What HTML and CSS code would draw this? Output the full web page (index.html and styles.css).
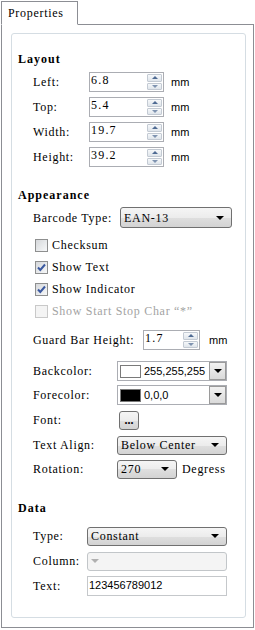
FILE: index.html
```html
<!DOCTYPE html>
<html lang="en">
<head>
    <meta charset="UTF-8">
    <title>Properties</title>
    <link rel="stylesheet" href="styles.css">
</head>
<body>
    <div class="tabs">
        <div class="tab">Properties</div>
    </div>
    <div class="panel">
        <div class="group">
            <h3 class="head-layout">Layout</h3>
            <div class="row row-first">
                <label class="lbl-layout">Left:</label>
                <span class="spin"><span class="val">6.8</span><span class="btns"><i class="up"></i><i class="down"></i></span></span>
                <span class="unit">mm</span>
            </div>
            <div class="row">
                <label class="lbl-layout">Top:</label>
                <span class="spin"><span class="val">5.4</span><span class="btns"><i class="up"></i><i class="down"></i></span></span>
                <span class="unit">mm</span>
            </div>
            <div class="row">
                <label class="lbl-layout">Width:</label>
                <span class="spin"><span class="val">19.7</span><span class="btns"><i class="up"></i><i class="down"></i></span></span>
                <span class="unit">mm</span>
            </div>
            <div class="row">
                <label class="lbl-layout">Height:</label>
                <span class="spin"><span class="val">39.2</span><span class="btns"><i class="up"></i><i class="down"></i></span></span>
                <span class="unit">mm</span>
            </div>

            <h3 class="head-appearance">Appearance</h3>
            <div class="row row-barcode">
                <label class="lbl-barcode">Barcode Type:</label>
                <span class="combo combo-barcode">EAN-13</span>
            </div>
            <div class="check check-first">
                <span class="cb"></span>Checksum
            </div>
            <div class="check">
                <span class="cb"><svg viewBox="0 0 11 11"><path d="M2 5.5 L4.3 8 L9 2.5"/></svg></span>Show Text
            </div>
            <div class="check">
                <span class="cb"><svg viewBox="0 0 11 11"><path d="M2 5.5 L4.3 8 L9 2.5"/></svg></span>Show Indicator
            </div>
            <div class="check disabled">
                <span class="cb"></span>Show Start Stop Char “*”
            </div>
            <div class="row row-guard">
                <label class="lbl-guard">Guard Bar Height:</label>
                <span class="spin spin-short"><span class="val">1.7</span><span class="btns"><i class="up"></i><i class="down"></i></span></span>
                <span class="unit unit-guard">mm</span>
            </div>
            <div class="row row-color">
                <label class="lbl-color">Backcolor:</label>
                <span class="color"><span class="swatch"></span><span class="cval">255,255,255</span><span class="dd"></span></span>
            </div>
            <div class="row row-tight">
                <label class="lbl-color">Forecolor:</label>
                <span class="color"><span class="swatch swatch-black"></span><span class="cval">0,0,0</span><span class="dd"></span></span>
            </div>
            <div class="row">
                <label class="lbl-color">Font:</label>
                <span class="btn">...</span>
            </div>
            <div class="row">
                <label class="lbl-color">Text Align:</label>
                <span class="combo combo-align">Below Center</span>
            </div>
            <div class="row row-tight">
                <label class="lbl-color">Rotation:</label>
                <span class="combo combo-rotation">270</span>
                <span class="degress">Degress</span>
            </div>

            <h3 class="head-data">Data</h3>
            <div class="row row-type">
                <label class="lbl-data">Type:</label>
                <span class="combo combo-data">Constant</span>
            </div>
            <div class="row">
                <label class="lbl-data">Column:</label>
                <span class="combo combo-data combo-disabled"></span>
            </div>
            <div class="row">
                <label class="lbl-data">Text:</label>
                <span class="textbox">123456789012</span>
            </div>
        </div>
    </div>
</body>
</html>
```

FILE: styles.css
```css
body {
    margin: 0;
    background: #fff;
    font-family: "Liberation Serif", serif;
    font-size: 12px;
    letter-spacing: 0.7px;
    line-height: 14px;
    color: #000;
}

.tabs {
    height: 25px;
    padding: 1px 0 0 1px;
    box-sizing: border-box;
}

.tab {
    position: relative;
    z-index: 1;
    width: 77px;
    height: 24px;
    box-sizing: border-box;
    border: 1px solid #8c8e94;
    border-bottom: 1px solid #fff;
    background: #fff;
    padding-left: 6px;
    line-height: 22px;
}

.panel {
    margin: -1px 0 0 1px;
    width: 253px;
    height: 604px;
    box-sizing: border-box;
    border: 1px solid #8c8e94;
    padding: 8px 7px 9px 9px;
}

.group {
    width: 235px;
    height: 585px;
    box-sizing: border-box;
    border: 1px solid #d5dde3;
    border-radius: 3px;
}

h3 {
    margin: 0;
    height: 14px;
    padding-left: 6px;
    font-size: 12px;
    font-weight: bold;
    letter-spacing: 1px;
}

.head-layout { margin-top: 18px; }
.head-appearance { margin-top: 21px; }
.head-data { margin-top: 22px; }

.row {
    display: flex;
    align-items: center;
    height: 20px;
    margin-top: 5px;
    padding-left: 21px;
}

.row-first { margin-top: 6px; }
.row-barcode { height: 21px; margin-top: 5px; }
.row-guard { margin-top: 11px; }
.row-color { margin-top: 11px; }
.row-tight { margin-top: 4px; }
.row-type { margin-top: 11px; }

label { flex: none; }
.lbl-layout { width: 56px; }
.lbl-barcode { width: 87px; }
.lbl-guard { width: 110px; }
.lbl-color { width: 84px; }
.lbl-data { width: 54px; }

/* spin boxes */
.spin {
    display: flex;
    width: 75px;
    height: 20px;
    box-sizing: border-box;
    border: 1px solid #abadb3;
    background: #fff;
}

.spin-short { width: 57px; }

.spin .val {
    flex: 1;
    padding-left: 1px;
    line-height: 14px;
    letter-spacing: 1.2px;
}

.btns {
    display: flex;
    flex-direction: column;
    width: 15px;
    margin: 1px 1px 1px 0;
    gap: 1px;
}

.btns i {
    flex: 1;
    display: flex;
    align-items: center;
    justify-content: center;
    border: 1px solid #c3cad3;
    border-radius: 1px;
    background: linear-gradient(#f6f8fa, #dfe5eb);
}

.btns i::after {
    content: "";
    border-left: 3px solid transparent;
    border-right: 3px solid transparent;
}

.btns .up::after { border-bottom: 3px solid #4f6b93; }
.btns .down::after { border-top: 3px solid #7f93b0; }

.unit {
    margin-left: 7px;
    font-family: "Liberation Sans", sans-serif;
    font-size: 11px;
    letter-spacing: 0;
}

.unit-guard { margin-left: 9px; }

/* combo boxes */
.combo {
    display: flex;
    align-items: center;
    justify-content: space-between;
    height: 19px;
    box-sizing: border-box;
    border: 1px solid #707070;
    border-radius: 3px;
    background: linear-gradient(#f5f5f5, #ececec 50%, #dfdfdf 50%, #d3d3d3);
    padding: 0 7px 0 3px;
}

.combo::after {
    content: "";
    border-left: 4px solid transparent;
    border-right: 4px solid transparent;
    border-top: 4px solid #000;
}

.combo-barcode { width: 112px; height: 21px; }
.combo-align { width: 110px; }
.combo-rotation { width: 60px; }
.combo-data { width: 140px; }

.combo-disabled {
    border-color: #c2c6c9;
    background: #f4f4f4;
}

.combo-disabled::after { border-top-color: #b0b0b0; }

.degress { margin-left: 5px; }

/* check boxes */
.check {
    display: flex;
    align-items: center;
    height: 16px;
    margin-top: 6px;
    padding-left: 23px;
}

.check-first { margin-top: 9px; }

.cb {
    display: flex;
    width: 13px;
    height: 13px;
    box-sizing: border-box;
    border: 1px solid #8e8f8f;
    background: linear-gradient(135deg, #d6d8db, #f7f8f9);
    margin-right: 4px;
}

.cb svg {
    width: 11px;
    height: 11px;
}

.cb path {
    fill: none;
    stroke: #3b59a0;
    stroke-width: 2;
}

.disabled { color: #a3a3a3; }
.disabled .cb {
    border-color: #c9c9c9;
    background: #f4f4f4;
}

/* colour pickers */
.color {
    display: flex;
    align-items: center;
    width: 110px;
    height: 20px;
    box-sizing: border-box;
    border: 1px solid #abadb3;
    background: #fff;
}

.swatch {
    width: 21px;
    height: 13px;
    box-sizing: border-box;
    border: 1px solid #7a7a7a;
    background: #fff;
    margin: 0 3px 0 2px;
}

.swatch-black { background: #000; }

.cval {
    flex: 1;
    font-family: "Liberation Sans", sans-serif;
    font-size: 11px;
    letter-spacing: 0;
}

.dd {
    display: flex;
    align-items: center;
    justify-content: center;
    width: 17px;
    height: 18px;
    box-sizing: border-box;
    border: 1px solid #9a9a9a;
    background: linear-gradient(#f2f2f2, #dadada);
}

.dd::after {
    content: "";
    border-left: 4px solid transparent;
    border-right: 4px solid transparent;
    border-top: 4px solid #000;
}

/* font button */
.btn {
    display: flex;
    align-items: center;
    justify-content: center;
    width: 20px;
    height: 19px;
    box-sizing: border-box;
    margin-left: 2px;
    border: 1px solid #707070;
    border-radius: 3px;
    background: linear-gradient(#f5f5f5, #ececec 50%, #dfdfdf 50%, #d3d3d3);
    font-weight: bold;
    letter-spacing: 0;
    line-height: 10px;
}

.textbox {
    width: 140px;
    height: 20px;
    box-sizing: border-box;
    border: 1px solid #c5c8cb;
    background: #fff;
    padding-left: 1px;
    font-family: "Liberation Sans", sans-serif;
    font-size: 11px;
    letter-spacing: 0;
    line-height: 16px;
}
```
